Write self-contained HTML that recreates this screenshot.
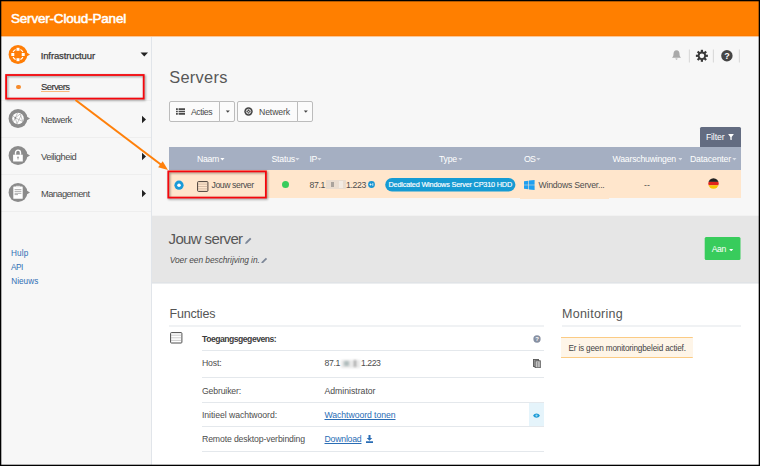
<!DOCTYPE html>
<html lang="nl"><head><meta charset="utf-8"><title>Server-Cloud-Panel</title>
<style>
html,body{margin:0;padding:0;}
body{width:760px;height:466px;overflow:hidden;background:#fff;font-family:"Liberation Sans",sans-serif;}
#root{position:relative;width:760px;height:466px;overflow:hidden;background:#fff;}
#root div,#root svg{position:absolute;box-sizing:border-box;}
.t{position:absolute;white-space:pre;line-height:1;font-family:"Liberation Sans",sans-serif;}
#frame{left:0;top:0;z-index:50;}
.hl{height:1px;background:#eeeeee;}
.btn{background:#fbfbfb;border:1px solid #bcbcbc;}

</style></head>
<body>
<div id="root">
<!-- header -->
<div style="left:0;top:0;width:760px;height:36px;background:#ff7f00;border-bottom:1px solid #fd7a00;"></div>
<div style="left:0;top:36px;width:760px;height:1px;background:#fbc795;z-index:2;"></div>
<!-- sidebar -->
<div style="left:0;top:36px;width:152px;height:430px;background:#f7f7f7;border-right:1px solid #e1e5ea;"></div>
<div class="hl" style="left:1px;top:100px;width:150px;"></div>
<div class="hl" style="left:1px;top:137px;width:150px;"></div>
<div class="hl" style="left:1px;top:174px;width:150px;"></div>
<div class="hl" style="left:1px;top:211px;width:150px;"></div>
<!-- main top bg -->
<div style="left:152px;top:36px;width:608px;height:179px;background:#f7f7f7;"></div>
<!-- grey band -->
<div style="left:152px;top:215px;width:608px;height:1px;background:#f2f2f2;"></div>
<div style="left:152px;top:216px;width:608px;height:67px;background:#e6e6e6;border-bottom:1px solid #e0e3e6;"></div>
<div style="left:152px;top:283px;width:608px;height:1px;background:#eceef0;z-index:2;"></div>
<!-- white -->
<div style="left:152px;top:283px;width:608px;height:183px;background:#fff;"></div>

<!-- sidebar icons -->
<svg style="left:7.2px;top:42.75px;" width="26" height="24" viewBox="0 0 26 24">
  <circle cx="11" cy="11.5" r="9.4" fill="#ff7d05"/><path d="M20 9.7 L23 11.5 L20 13.3 Z" fill="#ff7d05"/>
  <path d="M15.94 13.91 A5.5 5.5 0 0 1 13.41 16.44 M8.59 16.44 A5.5 5.5 0 0 1 6.06 13.91 M6.06 9.09 A5.5 5.5 0 0 1 8.59 6.56 M13.41 6.56 A5.5 5.5 0 0 1 15.94 9.09" fill="none" stroke="#fff" stroke-width="1.1"/>
  <rect x="9.5" y="4.800" width="3" height="3" fill="#fff"/><rect x="9.5" y="15.200" width="3" height="3" fill="#fff"/>
  <rect x="4.300" y="10" width="3" height="3" fill="#fff"/><rect x="14.700" y="10" width="3" height="3" fill="#fff"/>
</svg>
<svg style="left:7.2px;top:107px;" width="26" height="24" viewBox="0 0 26 24">
  <circle cx="11" cy="11.5" r="9.4" fill="#8b8b8b"/><path d="M20 9.7 L23 11.5 L20 13.3 Z" fill="#8b8b8b"/>
  <circle cx="11" cy="11.5" r="5.8" fill="#fff"/>
  <path d="M8.3 10.8 L13.2 7 M8.3 10.800 L10 16.800 M8.300 10.800 L15.800 14.500 M13.200 7 L15.800 14.500 M10 16.800 L14 8.500 M6 9 L8.300 10.800 L6.500 14.500 M10.5 6 L8.3 10.8" stroke="#9a9a9a" stroke-width="0.6" fill="none"/>
  <circle cx="8.3" cy="10.8" r="0.9" fill="#888"/>
</svg>
<svg style="left:7.2px;top:144.1px;" width="26" height="24" viewBox="0 0 26 24">
  <circle cx="11" cy="11.5" r="9.4" fill="#8b8b8b"/><path d="M20 9.7 L23 11.5 L20 13.3 Z" fill="#8b8b8b"/>
  <rect x="6.1" y="10.700" width="9.700" height="6.800" fill="#fff"/>
  <path d="M8.5 10.800 V8.800 a2.500 2.700 0 0 1 5 0 V10.800" fill="none" stroke="#fff" stroke-width="1.400"/>
  <circle cx="11" cy="13.300" r="0.800" fill="#8b8b8b"/><rect x="10.600" y="13.300" width="0.800" height="2.200" fill="#8b8b8b"/>
</svg>
<svg style="left:7.2px;top:181.2px;" width="26" height="24" viewBox="0 0 26 24">
  <circle cx="11" cy="11.5" r="9.4" fill="#8b8b8b"/><path d="M20 9.7 L23 11.5 L20 13.3 Z" fill="#8b8b8b"/>
  <rect x="6.300" y="5.500" width="9.400" height="12.200" rx="0.500" fill="#fff"/>
  <rect x="9" y="4.800" width="4" height="1.500" fill="#e4e4e4"/>
  <path d="M7.600 8.600 H14.400 M7.600 10.400 H14.400 M7.600 12.300 H14.400 M7.600 13.600 H11" stroke="#999" stroke-width="0.800"/>
</svg>
<!-- sidebar bullets/arrows -->
<div style="left:16.3px;top:84.8px;width:4.4px;height:4.4px;border-radius:50%;background:#f68b2c;"></div>
<svg style="left:140px;top:50.9px;" width="9" height="7" viewBox="0 0 9 7"><path d="M0.5 1.5 H8 L4.25 5.5 Z" fill="#222"/></svg>
<svg style="left:141px;top:114.9px;" width="6" height="9" viewBox="0 0 6 9"><path d="M1 0.7 L5 4.5 L1 8.3 Z" fill="#222"/></svg>
<svg style="left:141px;top:151.9px;" width="6" height="9" viewBox="0 0 6 9"><path d="M1 0.7 L5 4.5 L1 8.3 Z" fill="#222"/></svg>
<svg style="left:141px;top:188.9px;" width="6" height="9" viewBox="0 0 6 9"><path d="M1 0.7 L5 4.5 L1 8.3 Z" fill="#222"/></svg>

<!-- top right icons -->
<svg style="left:670px;top:48px;" width="76" height="16" viewBox="0 0 76 16">
  <path d="M6.5 2.2 c-2 0 -3 1.6 -3 3.6 c0 2.2 -0.6 3.2 -1.5 4 h9 c-0.9 -0.8 -1.5 -1.8 -1.5 -4 c0 -2 -1 -3.600 -3 -3.600 Z M5.400 10.600 a1.100 1.100 0 0 0 2.200 0 Z" fill="#aaa"/>
  <rect x="18.9" y="1.5" width="0.8" height="13" fill="#cfcfcf"/>
  <g transform="translate(31.9,7.8)" fill="#383838">
    <circle r="4.2"/>
    <g id="gt"><rect x="-1.100" y="-6" width="2.200" height="12"/></g>
    <rect x="-1.100" y="-6" width="2.200" height="12" transform="rotate(45)"/>
    <rect x="-1.100" y="-6" width="2.200" height="12" transform="rotate(90)"/>
    <rect x="-1.100" y="-6" width="2.200" height="12" transform="rotate(135)"/>
    <circle r="2.35" fill="#f7f7f7"/>
  </g>
  <rect x="42.9" y="1.5" width="0.8" height="13" fill="#cfcfcf"/>
  <circle cx="56.9" cy="7.8" r="5.7" fill="#454545"/>
  <text x="56.9" y="11.1" font-family="Liberation Sans, sans-serif" font-size="9" font-weight="700" fill="#fff" text-anchor="middle">?</text>
  <rect x="68.9" y="1.5" width="0.8" height="13" fill="#cfcfcf"/>
</svg>

<!-- buttons -->
<div class="btn" style="left:169px;top:101px;width:51px;height:21px;border-radius:2px 0 0 2px;"></div>
<div class="btn" style="left:219px;top:101px;width:16px;height:21px;border-radius:0 2px 2px 0;"></div>
<div class="btn" style="left:237px;top:101px;width:61px;height:21px;border-radius:2px 0 0 2px;"></div>
<div class="btn" style="left:297px;top:101px;width:16px;height:21px;border-radius:0 2px 2px 0;"></div>
<svg style="left:176px;top:108px;" width="9" height="7" viewBox="0 0 9 7"><path d="M0 0.300 h1.800 v1.600 h-1.800 Z M2.600 0.300 h6.400 v1.600 h-6.400 Z M0 2.700 h1.800 v1.600 h-1.800 Z M2.600 2.700 h6.400 v1.600 h-6.400 Z M0 5.100 h1.800 v1.600 h-1.800 Z M2.600 5.100 h6.400 v1.600 h-6.400 Z" fill="#4a4a4a"/></svg>
<svg style="left:224.6px;top:110.4px;" width="5.6" height="3.2" viewBox="0 0 6 4"><path d="M0.500 0.500 H5.500 L3 3.500 Z" fill="#444"/></svg>
<svg style="left:303px;top:110.4px;" width="5.6" height="3.2" viewBox="0 0 6 4"><path d="M0.500 0.500 H5.500 L3 3.500 Z" fill="#444"/></svg>
<svg style="left:244px;top:107px;" width="9" height="9" viewBox="0 0 9 9"><circle cx="4.500" cy="4.500" r="4.200" fill="#444"/><circle cx="4.500" cy="4.500" r="2.300" fill="none" stroke="#fff" stroke-width="0.700"/><path d="M2.800 3 L6 6.200 M3 6 L6.200 3.200" stroke="#fff" stroke-width="0.600"/></svg>

<!-- filter -->
<div style="left:700px;top:126.7px;width:40.6px;height:21.3px;background:#636c81;border-radius:1.5px 1.5px 0 0;"></div>
<svg style="left:727.9px;top:133.6px;" width="6" height="6.6" viewBox="0 0 7 8"><path d="M0 0 H7 L4.300 3.500 V8 L2.700 6.800 V3.500 Z" fill="#fff"/></svg>

<!-- table -->
<div style="left:169px;top:147px;width:571.6px;height:23.2px;background:#a5afc2;"></div>
<div style="left:169px;top:170px;width:571.6px;height:27.5px;background:#ffe6cc;"></div>
<div style="left:519.5px;top:170px;width:89.5px;height:28.5px;background:#ffe6cc;"></div>
<!-- header carets -->
<svg style="left:220.0px;top:158.2px;" width="4.8" height="2.5" viewBox="0 0 5 3"><path d="M0 0 H5 L2.5 3 Z" fill="#fff"/></svg>
<svg style="left:295.0px;top:158.2px;" width="4.8" height="2.5" viewBox="0 0 5 3"><path d="M0 0 H5 L2.5 3 Z" fill="#d9dee7"/></svg>
<svg style="left:317.1px;top:158.2px;" width="4.8" height="2.5" viewBox="0 0 5 3"><path d="M0 0 H5 L2.5 3 Z" fill="#d9dee7"/></svg>
<svg style="left:457.8px;top:158.2px;" width="4.8" height="2.5" viewBox="0 0 5 3"><path d="M0 0 H5 L2.5 3 Z" fill="#d9dee7"/></svg>
<svg style="left:536.1px;top:158.2px;" width="4.8" height="2.5" viewBox="0 0 5 3"><path d="M0 0 H5 L2.5 3 Z" fill="#d9dee7"/></svg>
<svg style="left:677.7px;top:158.2px;" width="4.8" height="2.5" viewBox="0 0 5 3"><path d="M0 0 H5 L2.5 3 Z" fill="#d9dee7"/></svg>
<svg style="left:731.8px;top:158.2px;" width="4.8" height="2.5" viewBox="0 0 5 3"><path d="M0 0 H5 L2.5 3 Z" fill="#d9dee7"/></svg>

<!-- row content -->
<svg style="left:173px;top:178.500px;" width="12" height="12" viewBox="0 0 12 12"><circle cx="6" cy="6.2" r="4.6" fill="#1a9ad8"/><circle cx="6" cy="6.2" r="1.75" fill="#fff"/></svg>
<svg style="left:196.500px;top:180.500px;" width="12" height="11" viewBox="0 0 12 11"><rect x="0.6" y="0.6" width="10.3" height="9.8" rx="0.8" fill="none" stroke="#4a3f3a" stroke-width="1"/><path d="M1 3.1 H10.5 M1 5.5 H10.5 M1 7.9 H10.5" stroke="#b89a88" stroke-width="0.55"/></svg>
<div style="left:281.500px;top:181px;width:7px;height:7px;border-radius:50%;background:#38cc5c;"></div>
<!-- blurred ip -->
<div style="left:326px;top:180px;width:20px;height:9px;background:#e9dccf;filter:blur(0.600px);"></div>
<div style="left:330.500px;top:182px;width:3px;height:5px;background:#aaa39c;filter:blur(0.700px);"></div>
<div style="left:339px;top:181px;width:4px;height:7px;background:#f3ebe2;filter:blur(0.600px);"></div>
<svg style="left:368.1px;top:181.2px;" width="7" height="7" viewBox="0 0 7 7"><circle cx="3.500" cy="3.500" r="3.400" fill="#1a96d2"/><path d="M1.500 3.500 H3.600 M2.550 2.450 V4.550" stroke="#fff" stroke-width="0.700"/><path d="M4.800 2.200 V4.800" stroke="#fff" stroke-width="0.800"/></svg>
<svg style="left:380px;top:175px;" width="140" height="20" viewBox="380 175 140 20"><rect x="385.2" y="178" width="130.2" height="13.6" rx="6.8" fill="#169bd3"/></svg>
<svg style="left:524px;top:179.500px;" width="11" height="10" viewBox="0 0 11 10"><path d="M0 1.300 L4.400 0.700 V4.700 H0 Z M5 0.600 L10.600 0 V4.700 H5 Z M0 5.300 H4.400 V9.300 L0 8.700 Z M5 5.300 H10.600 V10 L5 9.4 Z" fill="#1e9ff0"/></svg>
<svg style="left:707.500px;top:177.500px;" width="11" height="11" viewBox="0 0 11 11"><defs><clipPath id="fc"><circle cx="5.500" cy="5.500" r="5.200"/></clipPath></defs><g clip-path="url(#fc)"><rect width="11" height="3.900" fill="#222"/><rect y="3.900" width="11" height="3.400" fill="#e0261c"/><rect y="7.300" width="11" height="3.700" fill="#f7c600"/></g></svg>

<!-- band -->
<svg style="left:245px;top:237.4px;" width="7.2" height="7" viewBox="0 0 7 7"><path d="M0 7 L0.600 5.100 L5 0.700 L6.300 2 L1.900 6.400 Z" fill="#7d8798"/></svg>
<svg style="left:261.3px;top:256.7px;" width="6.8" height="6.8" viewBox="0 0 7 7"><path d="M0 7 L0.600 5.100 L5 0.700 L6.300 2 L1.900 6.400 Z" fill="#7d8798"/></svg>
<svg style="left:700px;top:232px;" width="46" height="32" viewBox="700 232 46 32"><rect x="704.7" y="236.9" width="35.8" height="23.1" rx="1.5" fill="#38cc5c"/></svg>
<svg style="left:729.4px;top:248.7px;" width="4.4" height="2.4" viewBox="0 0 5 3"><path d="M0 0 H5 L2.500 3 Z" fill="#fff"/></svg>

<!-- functies -->
<div style="left:169px;top:324.8px;width:375px;height:2.2px;background:#f0f2f4;"></div>
<div style="left:561.5px;top:324.8px;width:179px;height:2.2px;background:#f0f2f4;"></div>
<svg style="left:170.3px;top:332.4px;" width="13" height="12" viewBox="0 0 13 12"><rect x="0.600" y="0.600" width="11.300" height="10.400" rx="0.800" fill="#fff" stroke="#4d4d4d" stroke-width="1"/><path d="M1 3.200 H11.500 M1 5.800 H11.500 M1 8.400 H11.500" stroke="#a8a8a8" stroke-width="0.600"/></svg>
<div class="hl" style="left:201.500px;top:350px;width:342.500px;background:#e4e8ec;"></div>
<div class="hl" style="left:201.500px;top:377px;width:342.500px;background:#e4e8ec;"></div>
<div class="hl" style="left:201.500px;top:402px;width:342.500px;background:#e4e8ec;"></div>
<div class="hl" style="left:201.500px;top:426px;width:342.500px;background:#e4e8ec;"></div>
<div class="hl" style="left:201.500px;top:451px;width:342.500px;background:#e4e8ec;"></div>
<div style="left:529.4px;top:403px;width:14.6px;height:23px;background:#e5f4fb;"></div>
<!-- right icons -->
<svg style="left:532.55px;top:334.55px;" width="8" height="8" viewBox="0 0 8 8"><circle cx="4" cy="4" r="3.650" fill="#8790a2"/><text x="4" y="6.200" font-family="Liberation Sans, sans-serif" font-size="6" font-weight="700" fill="#fff" text-anchor="middle">?</text></svg>
<svg style="left:532.7px;top:358.6px;" width="8" height="9.2" viewBox="0 0 8 9.2"><rect x="0.500" y="0.500" width="5" height="7" fill="#aaa" stroke="#555" stroke-width="0.900"/><rect x="2.100" y="1.800" width="5.200" height="7" fill="#c4c4c4" stroke="#555" stroke-width="0.900"/><path d="M4.700 3 V8" stroke="#888" stroke-width="0.900"/></svg>
<svg style="left:533.4px;top:412.5px;" width="7" height="5.2" viewBox="0 0 7 5.2"><path d="M0.100 2.600 C1.500 -0.300 5.500 -0.300 6.900 2.600 C5.500 5.500 1.500 5.500 0.100 2.600 Z" fill="#1a9ad6"/><circle cx="3.500" cy="2.600" r="1.150" fill="#9fd6ef"/></svg>
<svg style="left:365.500px;top:435px;" width="7" height="8" viewBox="0 0 7 8"><path d="M2.500 0 H4.500 V3 H6.300 L3.500 5.800 L0.700 3 H2.500 Z M0 6.300 H7 V8 H0 Z" fill="#2a6db5"/></svg>

<!-- monitoring alert -->
<div style="left:561.2px;top:337.1px;width:131.5px;height:21.1px;background:linear-gradient(#fbcb84,#fbcb84) top/100% 1.3px no-repeat,linear-gradient(#fbcb84,#fbcb84) bottom/100% 1.3px no-repeat,#fef5e8;"></div>

<!-- blurred host ip -->
<div style="left:341px;top:359.500px;width:19px;height:8px;background:#e8e8e8;filter:blur(0.800px);"></div>
<div style="left:344px;top:361px;width:5px;height:5px;background:#9aa;filter:blur(1px);opacity:0.700;"></div>
<div style="left:354px;top:360px;width:2px;height:7px;background:#888;filter:blur(0.800px);opacity:0.700;"></div>

<!-- annotations -->
<svg style="left:0;top:66px;filter:drop-shadow(1.3px 1.3px 1.2px rgba(0,0,0,0.42));" width="160" height="44" viewBox="0 66 160 44"><rect x="6.1" y="75" width="137.6" height="23.6" fill="none" stroke="#f5060c" stroke-width="1.8"/></svg>
<svg style="left:160px;top:162px;filter:drop-shadow(1.3px 1.3px 1.2px rgba(0,0,0,0.42));" width="120" height="46" viewBox="160 162 120 46"><rect x="168.3" y="171.4" width="97.6" height="26.2" fill="none" stroke="#f5060c" stroke-width="1.8"/></svg>
<svg style="left:70px;top:96px;" width="105" height="82" viewBox="0 0 105 82"><path d="M5.5 4 L91.500 69" stroke="#ff800a" stroke-width="2.1" fill="none"/><path d="M98 74 L88.100 71.300 L92.700 65.200 Z" fill="#ff800a"/></svg>

<span class="t" style="left:11.00px;top:12.00px;font-size:13.5px;color:#fff;letter-spacing:-0.198px;-webkit-text-stroke:0.55px #fff;">Server-Cloud-Panel</span>
<span class="t" style="left:40.70px;top:51.00px;font-size:9.5px;color:#3a3a3a;letter-spacing:-0.119px;-webkit-text-stroke:0.25px #3a3a3a;">Infrastructuur</span>
<span class="t" style="left:41.00px;top:82.00px;font-size:9.5px;color:#2e2e2e;letter-spacing:-0.605px;-webkit-text-stroke:0.12px #2e2e2e;text-decoration:underline #f9b97c;text-underline-offset:0.6px;text-decoration-thickness:0.9px;">Servers</span>
<span class="t" style="left:41.00px;top:116.00px;font-size:9.3px;color:#484848;letter-spacing:-0.473px;">Netwerk</span>
<span class="t" style="left:41.00px;top:153.00px;font-size:9.3px;color:#484848;letter-spacing:-0.461px;">Veiligheid</span>
<span class="t" style="left:41.00px;top:190.00px;font-size:9.3px;color:#484848;letter-spacing:-0.587px;">Management</span>
<span class="t" style="left:11.10px;top:250.00px;font-size:8.2px;color:#2f6eb5;letter-spacing:0.114px;">Hulp</span>
<span class="t" style="left:11.00px;top:264.00px;font-size:8.2px;color:#2f6eb5;letter-spacing:-0.468px;">API</span>
<span class="t" style="left:11.20px;top:278.00px;font-size:8.2px;color:#2f6eb5;letter-spacing:0.040px;">Nieuws</span>
<span class="t" style="left:169.30px;top:69.00px;font-size:16.4px;color:#575757;letter-spacing:0.259px;">Servers</span>
<span class="t" style="left:190.90px;top:108.00px;font-size:8.7px;color:#4a4a4a;letter-spacing:-0.395px;">Acties</span>
<span class="t" style="left:259.00px;top:108.00px;font-size:8.7px;color:#4a4a4a;letter-spacing:-0.125px;">Netwerk</span>
<span class="t" style="left:705.90px;top:133.00px;font-size:8.7px;color:#fff;letter-spacing:-0.135px;">Filter</span>
<span class="t" style="left:197.00px;top:155.00px;font-size:8.7px;color:#fff;letter-spacing:-0.297px;">Naam</span>
<span class="t" style="left:271.50px;top:155.00px;font-size:8.7px;color:#fff;letter-spacing:-0.190px;">Status</span>
<span class="t" style="left:309.50px;top:155.00px;font-size:8.7px;color:#fff;letter-spacing:-0.359px;">IP</span>
<span class="t" style="left:439.00px;top:155.00px;font-size:8.7px;color:#fff;letter-spacing:-0.211px;">Type</span>
<span class="t" style="left:524.00px;top:155.00px;font-size:8.7px;color:#fff;letter-spacing:-0.781px;">OS</span>
<span class="t" style="left:612.50px;top:155.00px;font-size:8.7px;color:#fff;letter-spacing:-0.202px;">Waarschuwingen</span>
<span class="t" style="left:690.00px;top:155.00px;font-size:8.7px;color:#fff;letter-spacing:-0.150px;">Datacenter</span>
<span class="t" style="left:211.50px;top:181.00px;font-size:8.7px;color:#4a4a4a;letter-spacing:-0.422px;">Jouw server</span>
<span class="t" style="left:309.50px;top:181.00px;font-size:8.7px;color:#4e4e4e;letter-spacing:-0.355px;">87.1</span>
<span class="t" style="left:346.00px;top:181.00px;font-size:8.7px;color:#4e4e4e;letter-spacing:-0.350px;">1.223</span>
<span class="t" style="left:388.50px;top:181.00px;font-size:7.3px;color:#fff;letter-spacing:-0.197px;-webkit-text-stroke:0.15px #fff;">Dedicated Windows Server CP310 HDD</span>
<span class="t" style="left:538.50px;top:181.00px;font-size:8.7px;color:#4e4e4e;letter-spacing:-0.236px;">Windows Server...</span>
<span class="t" style="left:644.00px;top:181.00px;font-size:8.7px;color:#4e4e4e;letter-spacing:0.102px;">--</span>
<span class="t" style="left:168.50px;top:231.00px;font-size:15px;color:#575757;letter-spacing:-0.624px;">Jouw server</span>
<span class="t" style="left:169.80px;top:256.00px;font-size:8.4px;color:#4c4c4c;letter-spacing:-0.056px;font-style:italic;">Voer een beschrijving in.</span>
<span class="t" style="left:711.80px;top:245.00px;font-size:8.6px;color:#fff;letter-spacing:-0.432px;">Aan</span>
<span class="t" style="left:169.50px;top:308.00px;font-size:12.5px;color:#555;letter-spacing:-0.194px;">Functies</span>
<span class="t" style="left:562.00px;top:308.00px;font-size:12.5px;color:#555;letter-spacing:0.263px;">Monitoring</span>
<span class="t" style="left:202.00px;top:335.00px;font-size:8.6px;color:#3d3d3d;letter-spacing:-0.486px;font-weight:700;">Toegangsgegevens:</span>
<span class="t" style="left:202.00px;top:359.00px;font-size:8.7px;color:#4e4e4e;letter-spacing:-0.156px;">Host:</span>
<span class="t" style="left:202.00px;top:387.00px;font-size:8.7px;color:#4e4e4e;letter-spacing:-0.156px;">Gebruiker:</span>
<span class="t" style="left:202.00px;top:411.00px;font-size:8.7px;color:#4e4e4e;letter-spacing:-0.065px;">Initieel wachtwoord:</span>
<span class="t" style="left:202.00px;top:435.00px;font-size:8.7px;color:#4e4e4e;letter-spacing:-0.130px;">Remote desktop-verbinding</span>
<span class="t" style="left:324.50px;top:359.00px;font-size:8.7px;color:#4e4e4e;letter-spacing:-0.355px;">87.1</span>
<span class="t" style="left:361.00px;top:359.00px;font-size:8.7px;color:#4e4e4e;letter-spacing:-0.450px;">1.223</span>
<span class="t" style="left:324.50px;top:387.00px;font-size:8.7px;color:#4a4a4a;letter-spacing:-0.014px;">Administrator</span>
<span class="t" style="left:324.50px;top:411.00px;font-size:8.7px;color:#2a6db5;letter-spacing:-0.070px;text-decoration:underline;text-underline-offset:0.6px;text-decoration-thickness:0.9px;">Wachtwoord tonen</span>
<span class="t" style="left:324.50px;top:435.00px;font-size:8.7px;color:#2a6db5;letter-spacing:-0.205px;text-decoration:underline;text-underline-offset:0.6px;text-decoration-thickness:0.9px;">Download</span>
<span class="t" style="left:568.50px;top:345.00px;font-size:8.2px;color:#444;letter-spacing:-0.173px;">Er is geen monitoringbeleid actief.</span>
<svg id="frame" width="760" height="466" viewBox="0 0 760 466"><rect x="0" y="0" width="760" height="466" fill="none" stroke="#000" stroke-width="2.6"/></svg>
</div>
</body></html>
